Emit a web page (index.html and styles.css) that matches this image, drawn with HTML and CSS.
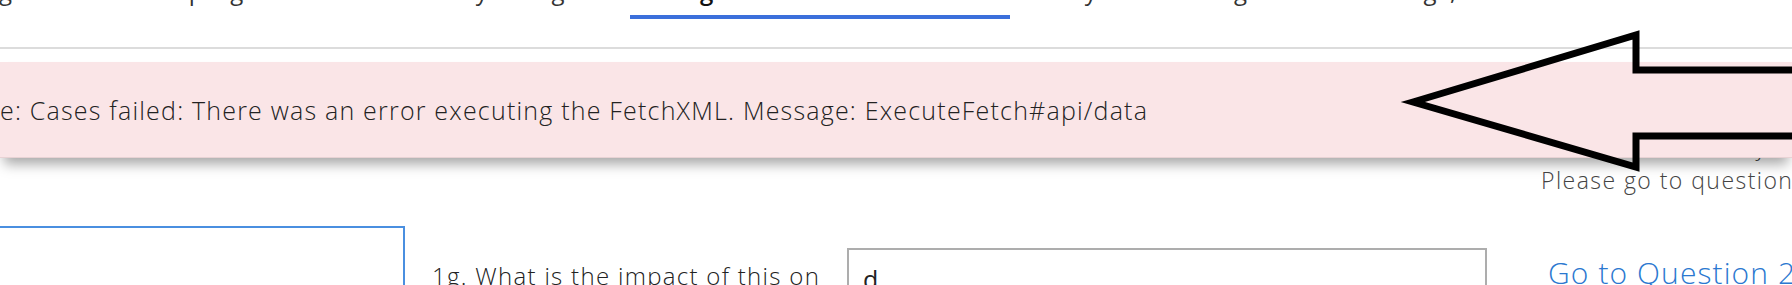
FILE: index.html
```html
<!DOCTYPE html>
<html lang="en">
<head>
    <meta charset="UTF-8">
    <meta name="viewport" content="width=device-width, initial-scale=1.0">
    <title>Case Form</title>
    <link rel="stylesheet" href="styles.css">
</head>
<body>
    <nav class="tabs">
        <div class="tab">Screening</div>
        <div class="tab">Sampling</div>
        <div class="tab">Safety Ratings</div>
        <div class="tab active">Signal Review Outcome</div>
        <div class="tab">Safety</div>
        <div class="tab">Tracking</div>
        <div class="tab">Knowledge, Other Notes</div>
    </nav>

    <div class="middle">
        <div class="mid-text">(N/A)</div>
        <div class="side-note">
            <div>If the answer is any other value then</div>
            <div>Please go to question 2</div>
        </div>
    </div>

    <div class="question-row">
        <div class="field field-focused"></div>
        <label class="question-label">1g. What is the impact of this on the business?</label>
        <div class="field">d</div>
        <a class="goto-link" href="#">Go to Question 2</a>
    </div>

    <div class="banner">e: Cases failed: There was an error executing the FetchXML. Message: ExecuteFetch#api/data</div>

    <!-- annotation arrow drawn over the page -->
    <svg class="arrow" viewBox="0 0 1792 285" width="1792" height="285">
        <polygon points="1413,102 1636,35 1636,70 1800,70 1800,136 1636,136 1636,167"
                 fill="none" stroke="#000" stroke-width="7" stroke-linejoin="miter"/>
    </svg>
</body>
</html>
```

FILE: styles.css
```css
body {
    margin: 0;
    width: 1792px;
    height: 285px;
    overflow: hidden;
    position: relative;
    font-family: "Open Sans", "Noto Sans", sans-serif;
    color: #333;
    background-color: #fff;
}
.tabs {
    display: flex;
    align-items: flex-start;
    height: 47px;
    border-bottom: 2px solid #dcdcdc;
    white-space: nowrap;
}
.tab {
    flex: none;
    margin-top: -25px;
    padding-bottom: 8px;
    font-size: 24px;
    line-height: 32px;
    color: #333;
    border-bottom: 4px solid transparent;
}
.tab:nth-child(1) { margin-left: -98px; }
.tab:nth-child(2) { margin-left: 128px; }
.tab:nth-child(3) { margin-left: 176px; }
.tab:nth-child(4) { margin-left: 54px; }
.tab:nth-child(5) { margin-left: 18px; }
.tab:nth-child(6) { margin-left: 56px; }
.tab:nth-child(7) { margin-left: 80px; }
.tab.active {
    width: 380px;
    box-sizing: border-box;
    padding-left: 50px;
    font-weight: 600;
    color: #111;
    border-bottom-color: #3b6fdb;
}
.middle {
    display: grid;
    grid-template-columns: 1541px 1fr;
    margin-top: 80px;
    white-space: nowrap;
}
.mid-text {
    margin-top: -2px;
    padding-left: 1001px;
    font-size: 24px;
    line-height: 29px;
}
.side-note {
    font-size: 23px;
    line-height: 34px;
    letter-spacing: 1.45px;
    font-weight: 300;
    color: #444;
}
.question-row {
    display: flex;
    align-items: flex-start;
    margin-top: 29px;
}
.field {
    flex: none;
    box-sizing: border-box;
    width: 640px;
    height: 90px;
    margin-top: 22px;
    padding: 12px 14px;
    border: 2px solid #adadad;
    font-size: 25px;
    line-height: 34px;
    color: #222;
}
.field-focused {
    width: 415px;
    margin-left: -10px;
    margin-top: 0;
    border-color: #4a8fe0;
}
.question-label {
    flex: none;
    width: 405px;
    margin-left: 27px;
    margin-right: 10px;
    margin-top: 34px;
    font-size: 24px;
    line-height: 32px;
    letter-spacing: 1.3px;
    font-weight: 300;
    color: #222;
}
.goto-link {
    flex: none;
    margin-left: 61px;
    margin-top: 27px;
    font-size: 30px;
    line-height: 40px;
    letter-spacing: 1.1px;
    font-weight: 300;
    color: #2b78d0;
    text-decoration: none;
    white-space: nowrap;
}
.banner {
    position: absolute;
    top: 62px;
    left: 0;
    width: 100%;
    height: 96px;
    background-color: #fae5e7;
    border-bottom: 1px solid #e8d2d4;
    box-sizing: border-box;
    box-shadow: 0 10px 12px -4px rgba(0, 0, 0, 0.35);
    font-size: 25px;
    line-height: 96px;
    letter-spacing: 1.2px;
    font-weight: 300;
    color: #222;
    white-space: nowrap;
}
.arrow {
    position: absolute;
    top: 0;
    left: 0;
    pointer-events: none;
}
```
